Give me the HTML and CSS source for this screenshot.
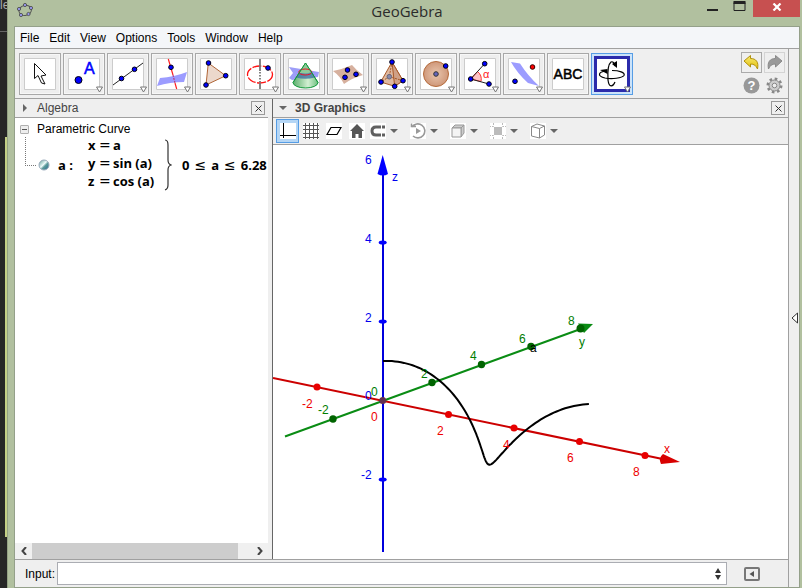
FILE: index.html
```html
<!DOCTYPE html>
<html lang="en">
<head>
<meta charset="utf-8">
<title>GeoGebra</title>
<link rel="stylesheet" href="styles.css">
</head>
<body>
<svg class="defs" aria-hidden="true">
  <defs>
    <symbol id="more" viewBox="0 0 8 7"><path d="M1 1H7L4 6Z" fill="#fff" stroke="#777"/></symbol>
    <linearGradient id="cone" x1="0" x2="1"><stop offset="0" stop-color="#5cae6c"/><stop offset=".6" stop-color="#d2efd2"/><stop offset="1" stop-color="#6fc080"/></linearGradient>
    <radialGradient id="ball"><stop offset="0" stop-color="#e9c6ae"/><stop offset="1" stop-color="#cf987a"/></radialGradient>
    <linearGradient id="marble" x1="0" y1="0" x2="1" y2="1"><stop offset=".1" stop-color="#78b0a8"/><stop offset=".45" stop-color="#eefafa"/><stop offset=".6" stop-color="#5d9c9c"/><stop offset="1" stop-color="#1d5f8a"/></linearGradient>
    <linearGradient id="gold" x1="0" x2="0" y2="1"><stop offset="0" stop-color="#f8ec70"/><stop offset="1" stop-color="#e2bd0c"/></linearGradient>
  </defs>
</svg>

<div class="desktop"><span>le</span></div>

<div class="window">
  <header class="titlebar">
    <svg class="logo" width="17" height="16" viewBox="0 0 17 16"><ellipse cx="8.3" cy="7.5" rx="6.3" ry="5" fill="none" stroke="#555" transform="rotate(-12 8 8)"/><g fill="#9a9af0" stroke="#444" stroke-width=".8"><circle cx="8" cy="2" r="1.6"/><circle cx="14" cy="5" r="1.6"/><circle cx="11.5" cy="11" r="1.6"/><circle cx="4" cy="12" r="1.6"/><circle cx="2" cy="6" r="1.6"/></g></svg>
    <h1>GeoGebra</h1>
    <div class="controls">
      <button type="button" aria-label="Minimize"><svg width="13" height="12"><path d="M1 9H12V11H1Z" fill="#222"/></svg></button>
      <button type="button" aria-label="Maximize"><svg width="13" height="12"><path d="M1 2.5H12V10.5H1Z" fill="none" stroke="#222"/><path d="M.5 1H12.5V4H.5Z" fill="#222"/></svg></button>
      <button type="button" class="close" aria-label="Close"><svg width="10" height="8"><path d="M1.5 .5L8.5 7.5M8.5 .5L1.5 7.5" stroke="#fff" stroke-width="2.2"/></svg></button>
    </div>
  </header>

  <div class="frame">
    <nav class="menu">
      <button type="button">File</button><button type="button">Edit</button><button type="button">View</button><button type="button">Options</button><button type="button">Tools</button><button type="button">Window</button><button type="button">Help</button>
    </nav>

    <div class="content">
      <main class="main">
        <div class="toolbar">
          <div class="tools">
            <button type="button" class="tool" aria-label="Move"><svg viewBox="-4 -4 40 40"><path class="card" d="M.5 .5H31.5V31.5H.5Z"/><path d="M10.5 5.5V20.5L14 17.5L17.5 25L21 26L17 18L22 17Z" fill="#fff" stroke="#111"/></svg></button>
            <button type="button" class="tool" aria-label="Point"><svg viewBox="-4 -4 40 40"><path class="card" d="M.5 .5H31.5V31.5H.5Z"/><circle class="pt" cx="10.5" cy="22" r="3.5"/><text x="16" y="16" font-size="16" fill="#00f" stroke="#00f" stroke-width=".5">A</text><use href="#more" x="27.5" y="28" width="8" height="7"/></svg></button>
            <button type="button" class="tool" aria-label="Line"><svg viewBox="-4 -4 40 40"><path class="card" d="M.5 .5H31.5V31.5H.5Z"/><path d="M1 27L31 5" stroke="#222"/><circle class="pt" cx="9.5" cy="20.5" r="2.3"/><circle class="pt" cx="22.5" cy="11.3" r="2.3"/><use href="#more" x="27.5" y="28" width="8" height="7"/></svg></button>
            <button type="button" class="tool" aria-label="Perpendicular Line"><svg viewBox="-4 -4 40 40"><path class="card" d="M.5 .5H31.5V31.5H.5Z"/><path d="M1 28L4 20Q18 19 31 14L28 24Q14 24 1 28Z" fill="#9c9cff"/><path d="M12.3 1L17 17M19 25L20.7 31" stroke="#f22" stroke-width="1.2"/><path d="M17 17L19 25" stroke="#b33c80" stroke-width="1.2" stroke-dasharray="2 1"/><circle class="pt" cx="15" cy="9.3" r="2.3"/><use href="#more" x="27.5" y="28" width="8" height="7"/></svg></button>
            <button type="button" class="tool" aria-label="Polygon"><svg viewBox="-4 -4 40 40"><path class="card" d="M.5 .5H31.5V31.5H.5Z"/><path d="M8.3 5L25.7 17.7L6 27Z" fill="#ecd8cc" stroke="#b06638"/><circle class="pt" cx="8.5" cy="5" r="2.3"/><circle class="pt" cx="25.7" cy="17.7" r="2.3"/><circle class="pt" cx="6" cy="27" r="2.3"/></svg></button>
            <button type="button" class="tool" aria-label="Circle"><svg viewBox="-4 -4 40 40"><path class="card" d="M.5 .5H31.5V31.5H.5Z"/><ellipse cx="16" cy="16.5" rx="12.5" ry="8.5" fill="none" stroke="#f11" stroke-width="1.3" stroke-dasharray="9 1.5"/><path d="M16 1V13M16 25V31" stroke="#777" stroke-width="1.8"/><path d="M16 14V25" stroke="#777" stroke-width="1.8" stroke-dasharray="1.5 1.5"/><circle class="pt" cx="24" cy="10" r="2.3"/><use href="#more" x="27.5" y="28" width="8" height="7"/></svg></button>
            <button type="button" class="tool" aria-label="Intersect Surfaces"><svg viewBox="-4 -4 40 40"><path class="card" d="M.5 .5H31.5V31.5H.5Z"/><path d="M1 9L31 14L30 19L4 22L1 20L5 15Z" fill="#9d9df8"/><path d="M17.5 5L5 24.5A12.5 5.5 0 0 0 30 24.5Z" fill="url(#cone)" stroke="#14993c"/><path d="M11 15L8 19.5Q17 22 27 19.5L24 14Z" fill="#3d72a2" opacity=".8"/><path d="M17.5 5L12 14Q17 17 23 14Z" fill="#8ec99a"/><ellipse cx="17.3" cy="14" rx="6.5" ry="3" fill="none" stroke="#e12"/><path d="M17.5 5L5 24.5M17.5 5L30 24.5" stroke="#14993c"/></svg></button>
            <button type="button" class="tool" aria-label="Plane through 3 Points"><svg viewBox="-4 -4 40 40"><path class="card" d="M.5 .5H31.5V31.5H.5Z"/><path d="M1 13Q11 11 20 7Q24 12 31 17Q20 20 12 26Q8 18 1 13Z" fill="#d6b09e"/><circle class="pt" cx="15.5" cy="12" r="2.3"/><circle class="pt" cx="13" cy="19.3" r="2.3"/><circle class="pt" cx="24" cy="16.3" r="2.3"/><use href="#more" x="27.5" y="28" width="8" height="7"/></svg></button>
            <button type="button" class="tool" aria-label="Pyramid"><svg viewBox="-4 -4 40 40"><path class="card" d="M.5 .5H31.5V31.5H.5Z"/><path d="M16 4L4.7 24L18.7 28.3L27 22.7Z" fill="#dfb8a0" stroke="#a85828"/><path d="M16 4L18.7 28.3L27 22.7Z" fill="#cfa086" stroke="#a85828"/><path d="M16 4L13.3 18.7L4.7 24M13.3 18.7L27 22.7" fill="none" stroke="#a85828" stroke-dasharray="2 1"/><circle cx="13.3" cy="18.7" r="2.3" fill="#88a" stroke="#667"/><circle class="pt" cx="16" cy="4" r="2.3"/><circle class="pt" cx="5" cy="24" r="2.3"/><circle class="pt" cx="18.7" cy="28.3" r="2.3"/><circle class="pt" cx="27" cy="22.7" r="2.3"/><use href="#more" x="27.5" y="28" width="8" height="7"/></svg></button>
            <button type="button" class="tool" aria-label="Sphere"><svg viewBox="-4 -4 40 40"><path class="card" d="M.5 .5H31.5V31.5H.5Z"/><circle cx="16" cy="16" r="12.5" fill="url(#ball)" stroke="#b56a3a"/><circle cx="16" cy="16" r="2.3" fill="#66b" stroke="#333"/><circle class="pt" cx="25.7" cy="8" r="2.3"/><use href="#more" x="27.5" y="28" width="8" height="7"/></svg></button>
            <button type="button" class="tool" aria-label="Angle"><svg viewBox="-4 -4 40 40"><path class="card" d="M.5 .5H31.5V31.5H.5Z"/><path d="M6.7 21L13.5 13.5A10 10 0 0 1 17 23.5Z" fill="#ffc4c4" stroke="#f33"/><path d="M20.7 5.7L6.7 21L25 26" fill="none" stroke="#222"/><text x="19" y="20" font-size="11" fill="#f22">α</text><circle class="pt" cx="6.7" cy="21" r="2.3"/><circle class="pt" cx="20.7" cy="5.7" r="2.3"/><circle class="pt" cx="25" cy="26" r="2.3"/><use href="#more" x="27.5" y="28" width="8" height="7"/></svg></button>
            <button type="button" class="tool" aria-label="Reflect about Plane"><svg viewBox="-4 -4 40 40"><path class="card" d="M.5 .5H31.5V31.5H.5Z"/><path d="M3 4L12 5.5Q20 18 31 28L20 25Q9 15 3 4Z" fill="#9c9cff"/><circle class="pt" cx="7" cy="23.3" r="2.3"/><circle cx="24.5" cy="9" r="2.3" fill="#f00" stroke="#300"/><use href="#more" x="27.5" y="28" width="8" height="7"/></svg></button>
            <button type="button" class="tool" aria-label="Text"><svg viewBox="-4 -4 40 40"><path class="card" d="M.5 .5H31.5V31.5H.5Z"/><text x="16" y="21" font-size="14" text-anchor="middle" stroke="#000" stroke-width=".5">ABC</text></svg></button>
            <button type="button" class="tool active" aria-label="Rotate 3D Graphics View" aria-pressed="true"><svg viewBox="-4 -4 40 40"><path d="M-.5 -.5H32.5V32.5H-.5Z" fill="#fff" stroke="#2b2bab" stroke-width="3"/><g fill="none" stroke="#000" stroke-width="1.2"><path d="M10 13C2 14 1 18 9 20C16 21.5 26 20 28 17.5C29.5 14.5 23 12.5 16 12.5"/><path d="M19 24C17 29 13 30 12 22C11.5 14 12.5 6 15 4C17 3 18 5 19 8"/></g><path d="M4 12L11.5 11V16ZM16 6L21 3V10Z"/><use href="#more" x="27.5" y="28" width="8" height="7"/></svg></button>
          </div>
          <div class="actions">
            <button type="button" class="act" aria-label="Undo"><svg viewBox="0 0 19 19"><path d="M2 8L8.5 2.5V5.5C14 5.5 17 9 15.5 16C14 12.5 12 11 8.5 11V14Z" fill="url(#gold)" stroke="#b0900c"/></svg></button>
            <button type="button" class="act dim" aria-label="Redo"><svg viewBox="0 0 19 19"><path d="M17 8L10.5 2.5V5.5C5 5.5 2 9 3.5 16C5 12.5 7 11 10.5 11V14Z" fill="#999" stroke="#8a8a8a"/></svg></button>
            <button type="button" class="act plain" aria-label="Help"><svg viewBox="0 0 19 19"><circle cx="9.5" cy="9.5" r="8" fill="#989898"/><text x="9.5" y="14" font-size="13" font-weight="bold" text-anchor="middle" fill="#fff">?</text></svg></button>
            <button type="button" class="act plain" aria-label="Preferences"><svg viewBox="0 0 19 19"><circle cx="9.5" cy="9.5" r="6.7" fill="none" stroke="#888" stroke-width="2.6" stroke-dasharray="2.6 2.66"/><circle cx="9.5" cy="9.5" r="5.5" fill="#ccc" stroke="#888"/><circle cx="9.5" cy="9.5" r="2.3" fill="#eee" stroke="#888"/></svg></button>
          </div>
        </div>

        <div class="views">
          <section class="algebra">
            <header class="head">
              <button type="button" class="twist" aria-label="Show style bar"><svg width="8" height="8"><path d="M2 0L6 4L2 8Z" fill="#666"/></svg></button>
              <h2 class="light">Algebra</h2>
              <button type="button" class="shut" aria-label="Close Algebra view"><svg width="7" height="7"><path d="M.5 .5L6.5 6.5M6.5 .5L.5 6.5" stroke="#333"/></svg></button>
            </header>
            <div class="tree">
              <div class="group"><button type="button" class="fold" aria-label="Collapse"></button>Parametric Curve</div>
              <div class="item">
                <span class="branch"></span>
                <svg class="marble" width="12" height="12"><circle cx="6" cy="6" r="5" fill="url(#marble)" stroke="#9ab"/></svg>
                <span class="name">a :</span>
                <div class="eqs">
                  <span>x</span><span class="op">=</span><span>a</span>
                  <span>y</span><span class="op">=</span><span>sin (a)</span>
                  <span>z</span><span class="op">=</span><span>cos (a)</span>
                </div>
                <svg class="brace" width="8" height="52"><path d="M1 1Q4 1 4 6V21Q4 25 7 26Q4 27 4 31V46Q4 50 1 51" fill="none" stroke="#333" stroke-width="1.2"/></svg>
                <span class="range">0 <span class="op">≤</span> a <span class="op">≤</span> 6.28</span>
              </div>
            </div>
            <div class="scroll">
              <button type="button" aria-label="Scroll left"><svg width="8" height="8"><path d="M6 0L2.5 4L6 8" fill="none" stroke="#444" stroke-width="2"/></svg></button>
              <div class="track"><div class="thumb"></div></div>
              <button type="button" aria-label="Scroll right"><svg width="8" height="8"><path d="M2 0L5.5 4L2 8" fill="none" stroke="#444" stroke-width="2"/></svg></button>
            </div>
          </section>

          <section class="graphics">
            <header class="head">
              <button type="button" class="twist" aria-label="Hide style bar"><svg width="8" height="8"><path d="M0 2H8L4 6Z" fill="#666"/></svg></button>
              <h2>3D Graphics</h2>
              <button type="button" class="shut" aria-label="Close 3D Graphics view"><svg width="7" height="7"><path d="M.5 .5L6.5 6.5M6.5 .5L.5 6.5" stroke="#333"/></svg></button>
            </header>
            <div class="stylebar">
              <button type="button" class="on" aria-label="Axes"><svg width="16" height="16"><path d="M0 0H16V16H0Z" fill="#fff"/><path d="M3.5 0V15M0 12.5H16" stroke="#000"/></svg></button>
              <button type="button" aria-label="Grid"><svg width="16" height="16"><path d="M0 0H16V16H0Z" fill="#fff"/><path d="M2.5 0V16M6.5 0V16M10.5 0V16M14.5 0V16M0 2.5H16M0 6.5H16M0 10.5H16M0 14.5H16" stroke="#555"/></svg></button>
              <button type="button" aria-label="Plane"><svg width="16" height="16"><path d="M0 0H16V16H0Z" fill="#fff"/><path d="M5 4.5H15L11 11.5H1Z" fill="none" stroke="#000" stroke-width="1.2"/></svg></button>
              <button type="button" aria-label="Default view"><svg width="16" height="16"><path d="M0 0H16V16H0Z" fill="#fff"/><path d="M8 1L15 8H13V15H9.5V11H6.5V15H3V8H1Z" fill="#555"/></svg></button>
              <button type="button" class="drop" aria-label="Point capturing"><svg width="28" height="16"><path d="M0 0H16V16H0Z" fill="#fff"/><path d="M11 4H6Q2 4 2 8T6 12H11" fill="none" stroke="#606060" stroke-width="3"/><path d="M12 2.5H15V5.5H12ZM12 10.5H15V13.5H12Z" fill="#606060"/><path d="M20 6H28L24 10Z" fill="#666"/></svg></button>
              <button type="button" class="drop" aria-label="Rotate view"><svg width="28" height="16"><path d="M0 0H16V16H0Z" fill="#fff"/><path d="M1.5 .5V3.5H6M2 4A7 7 0 1 1 3 13" fill="none" stroke="#999" stroke-width="1.6"/><path d="M6 5L11 8L6 11Z" fill="#999"/><path d="M20 6H28L24 10Z" fill="#666"/></svg></button>
              <button type="button" class="drop" aria-label="View direction"><svg width="28" height="16"><path d="M0 0H16V16H0Z" fill="#fff"/><path d="M2 5L5 2H14L11 5ZM11 5L14 2V10L11 14Z" fill="#ccc" stroke="#999"/><path d="M2 5H11V14H2Z" fill="#f4f4f4" stroke="#999"/><path d="M20 6H28L24 10Z" fill="#666"/></svg></button>
              <button type="button" class="drop" aria-label="Clipping"><svg width="28" height="16"><path d="M0 0H16V16H0Z" fill="#fff"/><path d="M4 4H12V12H4Z" fill="#bbb"/><path d="M3.5 0V3.5H0M12.5 0V3.5H16M3.5 16V12.5H0M12.5 16V12.5H16" fill="none" stroke="#bbb" stroke-dasharray="2 1"/><path d="M20 6H28L24 10Z" fill="#666"/></svg></button>
              <button type="button" class="drop" aria-label="Projection"><svg width="28" height="16"><path d="M0 0H16V16H0Z" fill="#fff"/><path d="M1.5 3.5L7 1L14.5 3V12L9.5 15L1.5 13ZM1.5 3.5L9.5 5.5L14.5 3M9.5 5.5V15" fill="none" stroke="#888"/><path d="M20 6H28L24 10Z" fill="#666"/></svg></button>
            </div>
            <svg class="scene" viewBox="273 145 515 414" preserveAspectRatio="xMinYMin meet" role="img" aria-label="Parametric curve a in 3D">
              <path d="M273 378L665 459.5" stroke="#c00" stroke-width="2"/><path d="M663 454L680 462L661 464Q658 458 663 454Z" fill="#d80000"/>
              <g fill="#e80000"><circle cx="317" cy="387" r="3.5"/><circle cx="448.5" cy="414.5" r="3.5"/><circle cx="514" cy="428" r="3.5"/><circle cx="579.5" cy="441.5" r="3.5"/><circle cx="645" cy="455.5" r="3.5"/></g>
              <path d="M285 436.5L582 328.5" stroke="#0a8c14" stroke-width="2"/><path d="M578 323.5L593 324L584 333Z" fill="#0a8c14"/>
              <g fill="#006400"><circle cx="333" cy="419" r="3.7"/><circle cx="432" cy="382.5" r="3.7"/><circle cx="481.5" cy="364.5" r="3.7"/><circle cx="531" cy="346.5" r="3.7"/><circle cx="580.5" cy="328.5" r="4"/></g>
              <path d="M383 170V552" stroke="#00d" stroke-width="2"/><path d="M382.7 155L388 174Q383 177 377.5 174Z" fill="#00f"/>
              <g fill="#00f"><ellipse cx="382.7" cy="242.5" rx="4" ry="2"/><ellipse cx="382.7" cy="321.5" rx="4" ry="2"/><ellipse cx="382.7" cy="479.5" rx="4" ry="2"/></g>
              <circle cx="382.7" cy="400.5" r="3.5" fill="#633050"/>
              <path id="curve" fill="none" stroke="#000" stroke-width="2"/>
              <g class="z"><text x="365" y="164">6</text><text x="392" y="181">z</text><text x="365" y="243">4</text><text x="365" y="322">2</text><text x="365" y="400">0</text><text x="361" y="479">-2</text></g>
              <g class="y"><text x="371" y="396">0</text><text x="318" y="414">-2</text><text x="421" y="378">2</text><text x="470" y="360">4</text><text x="519" y="343">6</text><text x="568" y="325">8</text><text x="579" y="346">y</text></g>
              <g class="x"><text x="302" y="408">-2</text><text x="371" y="421">0</text><text x="437" y="435">2</text><text x="503" y="449">4</text><text x="567" y="462">6</text><text x="633" y="476">8</text><text x="664" y="453">x</text></g>
              <text x="530" y="352">a</text>
            </svg>
          </section>
        </div>

        <form class="inputbar">
          <label for="cmd">Input:</label>
          <div class="field"><input id="cmd" type="text" autocomplete="off"><svg width="6" height="12"><path d="M0 5L3 0L6 5ZM0 7H6L3 12Z" fill="#333"/></svg></div>
          <button type="button" class="helper" aria-label="Input help"><svg width="16" height="14"><rect x="1" y="1" width="14" height="12" rx="1" fill="#eee" stroke="#777" stroke-width="2"/><path d="M10 4V10L5.500 7Z" fill="#555"/></svg></button>
        </form>
      </main>
      <aside class="side"><button type="button" aria-label="Perspectives"><svg width="7" height="12"><path d="M6.5 1V11L1 6Z" fill="#fff" stroke="#333"/></svg></button></aside>
    </div>
  </div>
</div>
<script src="script.js"></script>
</body>
</html>
```
FILE: styles.css
```css
* { box-sizing: border-box; }
body {
  margin: 0;
  display: flex;
  height: 100vh;
  overflow: hidden;
  font: 12px/16px "Liberation Sans", Arial, sans-serif;
  color: #000;
  background: #b1c09f;
}
button { border: 0; padding: 0; margin: 0; background: none; font: inherit; color: inherit; }
svg { display: block; }
h1, h2 { margin: 0; }
.defs { position: absolute; width: 0; height: 0; }

.desktop {
  flex: none;
  width: 7px;
  overflow: hidden;
  color: #aaa;
  line-height: 10px;
  background: linear-gradient(#c3cf85, #c3cf85) 5px 137px / 2px 400px no-repeat, linear-gradient(#666, #666) 0 31px / 7px 1px no-repeat, #262626;
}
.window {
  flex: 1;
  min-width: 0;
  display: flex;
  flex-direction: column;
  padding: 0 2px 0 6px;
  border-left: 1px solid #94a284;
}
.titlebar { flex: none; height: 26px; display: grid; grid-template-columns: 1fr auto 1fr; }
.logo { margin: 3px 0 0 3px; }
.titlebar h1 { font: 15px/22px "Open Sans", sans-serif; color: #2b2b2b; }
.controls { display: flex; justify-content: flex-end; align-items: flex-start; gap: 14px; }
.controls .close { width: 47px; height: 17px; margin-left: -7px; padding-bottom: 4px; background: #c75050; display: flex; align-items: center; justify-content: center; }

.frame { flex: 1; min-height: 0; display: flex; flex-direction: column; border: 1px solid #94a08a; background: #efefef; }
.menu { flex: none; display: flex; gap: 10px; height: 22px; padding-left: 5px; background: #f4f6f9; border-bottom: 1px solid #a0a0a0; }
.content { flex: 1; min-height: 0; display: flex; }
.main { flex: 1; min-width: 0; display: flex; flex-direction: column; border-right: 1px solid #a0a0a0; }
.side { flex: none; width: 10px; display: flex; align-items: center; justify-content: center; }

.toolbar { flex: none; height: 50px; display: flex; justify-content: space-between; padding: 3px 3px 0 4px; border-bottom: 1px solid #a0a0a0; }
.tools { display: flex; gap: 2px; padding-top: 1px; }
.tool { width: 42px; height: 42px; border: 1px solid #a8a8a8; background: #eee; box-shadow: inset 0 0 0 1px #f7f7f7; }
.tool svg { width: 40px; height: 40px; }
.tool.active { border-color: #569de5; background: #cbe3fa; box-shadow: none; }
.card { fill: #fff; stroke: #ccc; }
.pt { fill: #00f; stroke: #001; }
.actions { display: grid; grid-template-columns: 21px 21px; grid-auto-rows: 21px; gap: 2px; }
.act { border: 1px solid #aaa; }
.act.dim { border-color: #d4d4d4; }
.act.plain { border-color: transparent; }

.views { flex: 1; min-height: 0; display: flex; }
.algebra { flex: 0 1 253px; min-width: 0; display: flex; flex-direction: column; background: #fff; }
.head { flex: none; display: flex; align-items: center; height: 19px; padding-right: 3px; background: #efefef; border-bottom: 1px solid #a0a0a0; }
.twist { width: 22px; padding-left: 6px; }
.head h2 { flex: 1; font-size: 12px; color: #444; }
.head h2.light { font-weight: normal; }
.shut { width: 14px; height: 14px; border: 1px solid #999; display: flex; align-items: center; justify-content: center; }
.tree { flex: 1; min-height: 0; padding: 3px 0 0 5px; }
.group { display: flex; align-items: center; gap: 8px; }
.fold { width: 9px; height: 9px; border: 1px solid #b0b0b0; border-radius: 1px; background: linear-gradient(#555, #555) center / 5px 1px no-repeat, #eee; }
.item { display: flex; align-items: center; height: 56px; font: bold 13px/16px "Open Sans", sans-serif; white-space: nowrap; }
.branch { align-self: flex-start; width: 11px; height: 29px; margin-left: 5px; border: 1px dotted #777; border-width: 0 0 1px 1px; }
.marble { flex: none; margin-left: 2px; }
.name { width: 30px; margin-left: 8px; }
.eqs { align-self: flex-start; display: grid; grid-template-columns: 11px 14px 51px; row-gap: 2px; }
.op { font: 14px/16px "DejaVu Sans", sans-serif; }
.brace { flex: none; margin-right: 10px; }
.range { flex: none; display: flex; gap: 5px; }
.scroll { flex: none; display: flex; height: 16px; background: #f0f0f0; }
.scroll button { width: 17px; display: flex; align-items: center; justify-content: center; }
.track { flex: 1; }
.thumb { width: 94%; height: 100%; background: #cdcdcd; }

.graphics { flex: 1; min-width: 0; display: flex; flex-direction: column; margin-left: 4px; border-left: 1px solid #666; background: #fff; }
.stylebar { flex: none; display: flex; align-items: center; height: 27px; padding-left: 3px; background: #efefef; border-bottom: 1px solid #a0a0a0; }
.stylebar button { width: 23px; height: 24px; display: flex; align-items: center; justify-content: center; }
.stylebar .on { border: 1px solid #569de5; background: #b5d6f5; }
.stylebar .drop { width: 40px; justify-content: flex-start; padding-left: 2px; }
.scene { flex: 1; min-height: 0; width: 100%; font-size: 12px; }
.x { fill: #e00; }
.y { fill: #007d00; }
.z { fill: #00e; }

.inputbar { flex: none; display: flex; align-items: center; height: 28px; padding-left: 10px; border-top: 1px solid #a0a0a0; }
.inputbar label { width: 32px; }
.field { flex: 1; display: flex; align-items: center; height: 23px; padding-right: 5px; background: #fff; border: 1px solid #abadb3; }
.field input { flex: 1; min-width: 0; border: 0; outline: 0; background: none; font: inherit; }
.helper { margin: 0 28px 0 17px; }
```
FILE: script.js
```js
// Projects (a, sin a, cos a) onto the scene and draws it for 0 <= a <= 6.28.
const steps = 120;
const points = [];
for (let i = 0; i <= steps; i++) {
  const a = (6.28 * i) / steps;
  const px = 383 + 32.8 * a + 24.75 * Math.sin(a);
  const py = 400.5 + 6.85 * a - 9.1 * Math.sin(a) - 39.5 * Math.cos(a);
  points.push(px.toFixed(1) + " " + py.toFixed(1));
}
document.getElementById("curve").setAttribute("d", "M" + points.join("L"));
```
